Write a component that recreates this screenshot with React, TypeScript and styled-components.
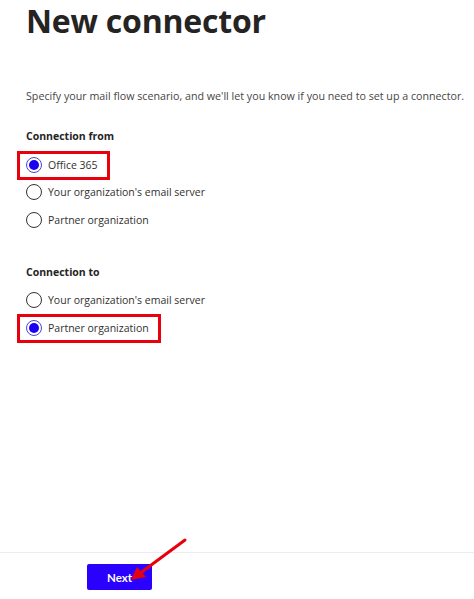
import React from "react";
import styled, { createGlobalStyle, css } from "styled-components";

const GlobalStyle = createGlobalStyle`
  html, body { margin: 0; padding: 0; background: #ffffff; }
  body { font-family: "Open Sans", "Noto Sans", sans-serif; color: #323130; }
  * { box-sizing: border-box; }
`;

const Page = styled.div`
  min-height: 100vh;
  display: flex;
  flex-direction: column;
`;

const Content = styled.main`
  padding: 0 26px;
  display: flex;
  flex-direction: column;
`;

const Title = styled.h1`
  margin: 0;
  font-family: "Open Sans", sans-serif;
  font-weight: 700;
  font-size: 32px;
  line-height: 42px;
  color: #252423;
  letter-spacing: -0.2px;
`;

const Description = styled.p`
  margin: 46px 0 0;
  font-size: 10.7px;
  line-height: 16px;
  color: #484644;
  white-space: nowrap;
`;

const Section = styled.section<{ $gap: number }>`
  margin-top: ${(p) => p.$gap}px;
  display: flex;
  flex-direction: column;
  align-items: flex-start;
`;

const SectionTitle = styled.h2`
  margin: 0 0 7px;
  font-size: 10.5px;
  line-height: 16px;
  font-weight: 700;
  color: #252423;
`;

const RadioRow = styled.label<{ $highlight?: boolean }>`
  position: relative;
  display: inline-flex;
  align-items: center;
  gap: 6px;
  height: 27.5px;
  font-size: 10.5px;
  color: #323130;
  cursor: pointer;
  ${(p) =>
    p.$highlight &&
    css`
      &::after {
        content: "";
        position: absolute;
        left: -9px;
        right: -12px;
        top: 0;
        bottom: -1px;
        border: 3px solid #e8000d;
        pointer-events: none;
      }
    `}
`;

const Circle = styled.span<{ $checked?: boolean }>`
  width: 16px;
  height: 16px;
  border-radius: 50%;
  border: 1px solid ${(p) => (p.$checked ? "#4b44d6" : "#323130")};
  display: flex;
  align-items: center;
  justify-content: center;
  flex-shrink: 0;
  &::before {
    content: "";
    width: 10px;
    height: 10px;
    border-radius: 50%;
    background: ${(p) => (p.$checked ? "#1c00f0" : "transparent")};
  }
`;

const Footer = styled.footer`
  margin-top: auto;
  border-top: 1px solid #ebebf3;
  padding: 11px 0 9px 87px;
  position: relative;
`;

const NextButton = styled.button`
  width: 65px;
  height: 26px;
  border: none;
  border-radius: 2px;
  background: #2a00ff;
  color: #ffffff;
  font-family: Lato, "Open Sans", sans-serif;
  font-weight: 700;
  font-size: 11.5px;
  padding: 0;
  cursor: pointer;
`;

const Arrow = styled.svg`
  position: absolute;
  left: 125px;
  top: -16px;
  width: 70px;
  height: 50px;
  pointer-events: none;
`;

type Option = { label: string; checked?: boolean };

const RadioGroup: React.FC<{ options: Option[] }> = ({ options }) => (
  <>
    {options.map((o) => (
      <RadioRow key={o.label} $highlight={o.checked}>
        <Circle $checked={o.checked} />
        {o.label}
      </RadioRow>
    ))}
  </>
);

export default function App() {
  return (
    <Page>
      <GlobalStyle />
      <Content>
        <Title>New connector</Title>
        <Description>
          Specify your mail flow scenario, and we'll let you know if you need to set up a connector.
        </Description>
        <Section $gap={24}>
          <SectionTitle>Connection from</SectionTitle>
          <RadioGroup
            options={[
              { label: "Office 365", checked: true },
              { label: "Your organization's email server" },
              { label: "Partner organization" },
            ]}
          />
        </Section>
        <Section $gap={30}>
          <SectionTitle>Connection to</SectionTitle>
          <RadioGroup
            options={[
              { label: "Your organization's email server" },
              { label: "Partner organization", checked: true },
            ]}
          />
        </Section>
      </Content>
      <Footer>
        <NextButton>Next</NextButton>
        <Arrow viewBox="0 0 70 50">
          <line x1="60" y1="3" x2="14" y2="37" stroke="#e8000d" strokeWidth="3" strokeLinecap="round" />
          <polygon points="6,43 12,30 21,40" fill="#e8000d" />
        </Arrow>
      </Footer>
    </Page>
  );
}
